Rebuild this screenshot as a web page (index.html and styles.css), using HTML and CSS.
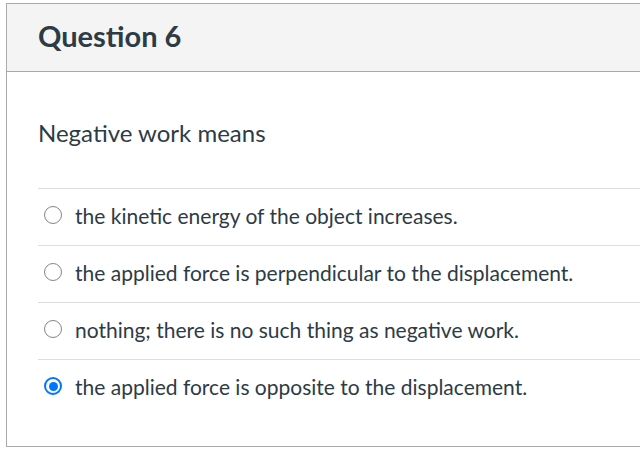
FILE: index.html
```html
<!DOCTYPE html>
<html>
<head>
<meta charset="utf-8">
<link rel="stylesheet" href="styles.css">
</head>
<body>
<div class="question">
  <div class="header"><h2 class="title">Question 6</h2></div>
  <div class="content">
    <p class="prompt">Negative work means</p>
    <div class="answers">
      <label class="answer"><span class="radio"></span><span class="text">the kinetic energy of the object increases.</span></label>
      <label class="answer"><span class="radio"></span><span class="text">the applied force is perpendicular to the displacement.</span></label>
      <label class="answer"><span class="radio"></span><span class="text">nothing; there is no such thing as negative work.</span></label>
      <label class="answer"><span class="radio checked"></span><span class="text">the applied force is opposite to the displacement.</span></label>
    </div>
  </div>
</div>
</body>
</html>
```
FILE: styles.css
```css
html, body { margin: 0; padding: 0; background: #fff; }
body { font-family: Lato, "Open Sans", sans-serif; color: #2d3b45; overflow: hidden; }
.question {
  margin: 3px 0 0 6px;
  height: 444px;
  border: 1px solid #aaaaaa;
  border-right: none;
  box-sizing: border-box;
}
.header {
  height: 68px;
  background: #f4f4f4;
  border-bottom: 1px solid #aaaaaa;
  display: flex;
  align-items: center;
  padding: 0 0 4px 31px;
  box-sizing: border-box;
}
.title { margin: 0; font-size: 29px; line-height: 34px; font-weight: 700; }
.content { padding: 0 0 0 31px; }
.prompt { margin: 46px 0 0; font-size: 24px; line-height: 30px; height: 70px; }
.answer {
  display: flex;
  align-items: center;
  height: 57px;
  border-top: 1px solid #dddddd;
  font-size: 21px;
  padding-bottom: 4px;
  box-sizing: border-box;
}
.radio {
  display: block;
  width: 18px; height: 18px;
  min-width: 18px;
  border: 1.5px solid #858585;
  border-radius: 50%;
  box-sizing: border-box;
  margin-left: 6px;
  margin-right: 13px;
  flex: none;
  position: relative;
}
.radio.checked { border: 2px solid #0075ff; }
.radio.checked::after {
  content: ""; position: absolute; left: 2.5px; top: 2.5px; width: 9px; height: 9px; border-radius: 50%; background: #0075ff;
}
```
